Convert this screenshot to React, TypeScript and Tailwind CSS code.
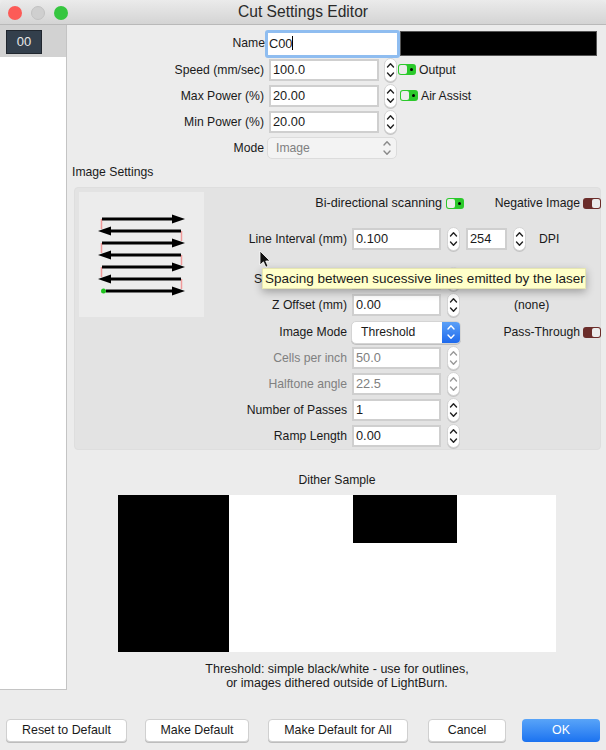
import React from 'react';

const FONT = 'font-["Liberation_Sans",Arial,sans-serif]';

// Up/down chevrons used by the spin boxes and combo boxes
const Chevrons = ({ color = '#222', w = 9, h = 18 }: { color?: string; w?: number; h?: number }) => (
  <svg width={w} height={h} viewBox="0 0 9 18" fill="none" stroke={color} strokeWidth="1.4" strokeLinecap="round" strokeLinejoin="round">
    <path d="M1.5 6 4.5 2.8 7.5 6" />
    <path d="M1.5 12 4.5 15.2 7.5 12" />
  </svg>
);

const Spinner = ({ disabled = false }: { disabled?: boolean }) => (
  <div className="w-[13px] h-[24px] rounded-[7px] bg-white border border-[#d4d4d4] flex items-center justify-center shrink-0 shadow-[0_1px_0_#c4c4c4]">
    <Chevrons color={disabled ? '#9a9a9a' : '#222'} />
  </div>
);

const Field = ({ value, width, disabled = false }: { value: string; width: string; disabled?: boolean }) => (
  <div className={`${width} h-[22px] bg-white border-2 border-[#cfcfcf] pl-[2px] text-[12.8px] leading-[18px] shrink-0 ${disabled ? 'text-[#808080]' : 'text-[#1a1a1a]'}`}>
    {value}
  </div>
);

const ToggleOn = () => (
  <div className="w-[18px] h-[11px] rounded-[3px] bg-[#2bc92b] flex items-center p-[1px] shrink-0">
    <div className="w-[8px] h-[9px] rounded-[2px] bg-[#ececec]" />
    <div className="w-[3px] h-[3px] rounded-full bg-black ml-[3px]" />
  </div>
);

const ToggleOff = () => (
  <div className="w-[18px] h-[11px] rounded-[3px] bg-[#6b2d2a] flex items-center justify-end p-[1px] shrink-0">
    <div className="w-[8px] h-[9px] rounded-[2px] bg-[#ececec]" />
  </div>
);

const TopRow = ({ label, value, extra }: { label: string; value: string; extra?: React.ReactNode }) => (
  <div className="h-[26px] flex items-center">
    <div className="w-[197px] text-right shrink-0">{label}</div>
    <div className="ml-[5px]"><Field value={value} width="w-[110px]" /></div>
    <div className="ml-[5px]"><Spinner /></div>
    {extra}
  </div>
);

const PanelRow = ({ label, value, disabled = false, children }: { label: string; value: string; disabled?: boolean; children?: React.ReactNode }) => (
  <div className="h-[26px] flex items-center">
    <div className={`w-[143px] text-right shrink-0 ${disabled ? 'text-[#808080]' : ''}`}>{label}</div>
    <div className="ml-[5px]"><Field value={value} width="w-[89px]" disabled={disabled} /></div>
    <div className="ml-[6px]"><Spinner disabled={disabled} /></div>
    {children}
  </div>
);

const ScanPreview = () => {
  const rows = [27, 39, 51, 63, 75, 87, 99];
  return (
    <svg width="125" height="125" viewBox="0 0 125 125" className="block">
      <g stroke="#f09a9a" strokeWidth="1.5">
        <path d="M22.5 27V37M102.5 39V49M22.5 51V61M102.5 63V73M22.5 75V85M102.5 87V97" />
      </g>
      {rows.map((y, i) =>
        i % 2 === 0 ? (
          <g key={y}>
            <path d={`M${i === 6 ? 27 : 23} ${y}H96`} stroke="#000" strokeWidth="3" />
            <path d={`M93 ${y - 4.5}L106 ${y}L93 ${y + 4.5}Z`} fill="#000" />
          </g>
        ) : (
          <g key={y}>
            <path d={`M102 ${y}H28`} stroke="#000" strokeWidth="3" />
            <path d={`M32 ${y - 4.5}L19 ${y}L32 ${y + 4.5}Z`} fill="#000" />
          </g>
        ),
      )}
      <circle cx="24.5" cy="99" r="2.5" fill="#1fc21f" />
    </svg>
  );
};

const FooterButton = ({ label, className }: { label: string; className: string }) => (
  <button className={`h-[23px] rounded-[4px] bg-white border border-[#d0d0d0] shadow-[0_1px_0_#bdbdbd] text-[#1a1a1a] text-[12.4px] leading-none ${className}`}>
    {label}
  </button>
);

export default function App() {
  return (
    <div className={`${FONT} relative w-[606px] h-[750px] bg-[#ececec] text-[12.2px] text-[#1a1a1a] overflow-hidden flex flex-col`}>
      {/* Title bar */}
      <div className="h-[25px] shrink-0 relative flex items-center justify-center bg-gradient-to-b from-[#ebebeb] to-[#d4d4d4] border-b border-[#b9b9b9] rounded-t-[5px]">
        <div className="absolute left-[8px] top-[6px] flex gap-[9px]">
          <div className="w-[14px] h-[14px] rounded-full bg-[#fc5b57]" />
          <div className="w-[14px] h-[14px] rounded-full bg-[#cfcfcf] border border-[#c2c2c2]" />
          <div className="w-[14px] h-[14px] rounded-full bg-[#35c63f]" />
        </div>
        <span className="text-[15.6px] text-[#2a2a2a]">Cut Settings Editor</span>
      </div>

      <div className="h-[665px] flex shrink-0">
        {/* Layer list */}
        <div className="w-[67px] shrink-0 flex flex-col border-r border-b border-[#c4c4c4] bg-white">
          <div className="h-[32px] bg-[#d2d2d2] pl-[6px] pt-[5px]">
            <div className="w-[36px] h-[24px] bg-[#333f4c] border border-[#20262e] text-[#e8e8e8] text-[13px] text-center leading-[22px]">00</div>
          </div>
        </div>

        <div className="w-[539px] pt-[5px]">
          <div className="h-[27px] flex items-center">
            <div className="w-[198px] text-right shrink-0">Name</div>
            <div className="w-[135px] h-[28px] border-[3px] border-[#8fbdf0] rounded-[3px] bg-white pl-[1px] text-[12.8px] leading-[22px] shrink-0 relative z-10">
              C00<span className="inline-block w-[1px] h-[14px] bg-black align-[-2px]" />
            </div>
            <div className="w-[197px] h-[25px] bg-black border border-[#555] shrink-0" />
          </div>
          <TopRow
            label="Speed (mm/sec)"
            value="100.0"
            extra={
              <div className="flex items-center ml-[1px]">
                <ToggleOn />
                <span className="ml-[3px]">Output</span>
              </div>
            }
          />
          <TopRow
            label="Max Power (%)"
            value="20.00"
            extra={
              <div className="flex items-center ml-[3px]">
                <ToggleOn />
                <span className="ml-[3px]">Air Assist</span>
              </div>
            }
          />
          <TopRow label="Min Power (%)" value="20.00" />
          <div className="h-[26px] flex items-center">
            <div className="w-[197px] text-right shrink-0">Mode</div>
            <div className="ml-[3px] w-[130px] h-[22px] rounded-[5px] bg-[#f3f3f3] border border-[#dcdcdc] flex items-center justify-between pl-[8px] pr-[4px] text-[#808080] shrink-0">
              Image
              <Chevrons color="#8a8a8a" w={10} h={18} />
            </div>
          </div>

          <div className="mt-[4px] ml-[5px] h-[14px] leading-[14px]">Image Settings</div>

          {/* Image settings panel */}
          <div className="mt-[8px] ml-[7px] w-[527px] h-[263px] bg-[#e3e3e3] rounded-[4px] border border-[#dedede] flex relative">
            <div className="ml-[4px] mt-[4px] w-[125px] h-[125px] bg-[#ececec] shrink-0">
              <ScanPreview />
            </div>
            <div className="pt-[2px] w-[397px]">
              <div className="h-[26px] flex items-center">
                <div className="w-[238px] text-right shrink-0 text-[12.6px]">Bi-directional scanning</div>
                <div className="ml-[4px]"><ToggleOn /></div>
                <div className="w-[116px] text-right shrink-0">Negative Image</div>
                <div className="ml-[3px]"><ToggleOff /></div>
              </div>
              <div className="mt-[10px]">
                <PanelRow label="Line Interval (mm)" value="0.100">
                  <div className="ml-[6px]"><Field value="254" width="w-[41px]" /></div>
                  <div className="ml-[6px]"><Spinner /></div>
                  <span className="ml-[13px]">DPI</span>
                </PanelRow>
              </div>
              <div className="mt-[14px] h-[26px] flex items-center">
                <div className="w-[143px] pl-[50px] shrink-0">S</div>
                <div className="ml-[5px]"><Field value="" width="w-[89px]" /></div>
                <div className="ml-[6px]"><Spinner /></div>
              </div>
              <PanelRow label="Z Offset (mm)" value="0.00">
                <span className="ml-[54px]">(none)</span>
              </PanelRow>
              <div className="mt-[1px] h-[26px] flex items-center">
                <div className="w-[143px] text-right shrink-0">Image Mode</div>
                <div className="ml-[4px] w-[110px] h-[23px] rounded-[5px] bg-white border border-[#d4d4d4] shadow-[0_1px_0_#c0c0c0] flex items-center justify-between pl-[9px] overflow-hidden shrink-0">
                  Threshold
                  <div className="w-[18px] h-[23px] bg-gradient-to-b from-[#5ea2f7] to-[#1a66ec] flex items-center justify-center">
                    <Chevrons color="#ffffff" w={10} h={18} />
                  </div>
                </div>
                <div className="w-[119px] text-right shrink-0">Pass-Through</div>
                <div className="ml-[3px]"><ToggleOff /></div>
              </div>
              <PanelRow label="Cells per inch" value="50.0" disabled />
              <PanelRow label="Halftone angle" value="22.5" disabled />
              <PanelRow label="Number of Passes" value="1" />
              <PanelRow label="Ramp Length" value="0.00" />
            </div>
          </div>

          {/* Dither sample */}
          <div className="mt-[23px] w-[540px] text-center h-[14px] leading-[14px]">Dither Sample</div>
          <div className="mt-[8px] ml-[51px] w-[438px] h-[157px] bg-white flex">
            <div className="w-[111px] h-full bg-black" />
            <div className="ml-[124px] w-[104px] h-[48px] bg-black" />
          </div>
          <div className="mt-[10px] w-[540px] text-center text-[12.5px] leading-[14px]">
            <div>Threshold: simple black/white - use for outlines,</div>
            <div>or images dithered outside of LightBurn.</div>
          </div>
        </div>
      </div>

      {/* Footer buttons */}
      <div className="pt-[29px] pl-[6px] flex">
        <FooterButton label="Reset to Default" className="w-[121px]" />
        <FooterButton label="Make Default" className="w-[104px] ml-[18px]" />
        <FooterButton label="Make Default for All" className="w-[140px] ml-[19px]" />
        <FooterButton label="Cancel" className="w-[78px] ml-[20px]" />
        <button className="w-[78px] h-[23px] ml-[16px] rounded-[4px] bg-gradient-to-b from-[#58a4f8] to-[#1a72f0] text-white text-[12.4px] leading-none">OK</button>
      </div>

      {/* Tooltip and mouse pointer over the form */}
      <div className="absolute left-[262px] top-[268px] w-[324px] h-[21px] bg-[#ffffc9] border border-[#e6e6b0] shadow-[0_3px_8px_rgba(0,0,0,0.3)] pl-[2px] text-[13.5px] leading-[19px] whitespace-nowrap">
        Spacing between sucessive lines emitted by the laser
      </div>
      <svg className="absolute left-[259px] top-[250px]" width="13" height="19" viewBox="0 0 13 19">
        <path d="M1 1V15L4.4 11.8L6.8 17.2L9 16.2L6.7 11H11Z" fill="#111" stroke="#fff" strokeWidth="0.8" />
      </svg>
    </div>
  );
}
